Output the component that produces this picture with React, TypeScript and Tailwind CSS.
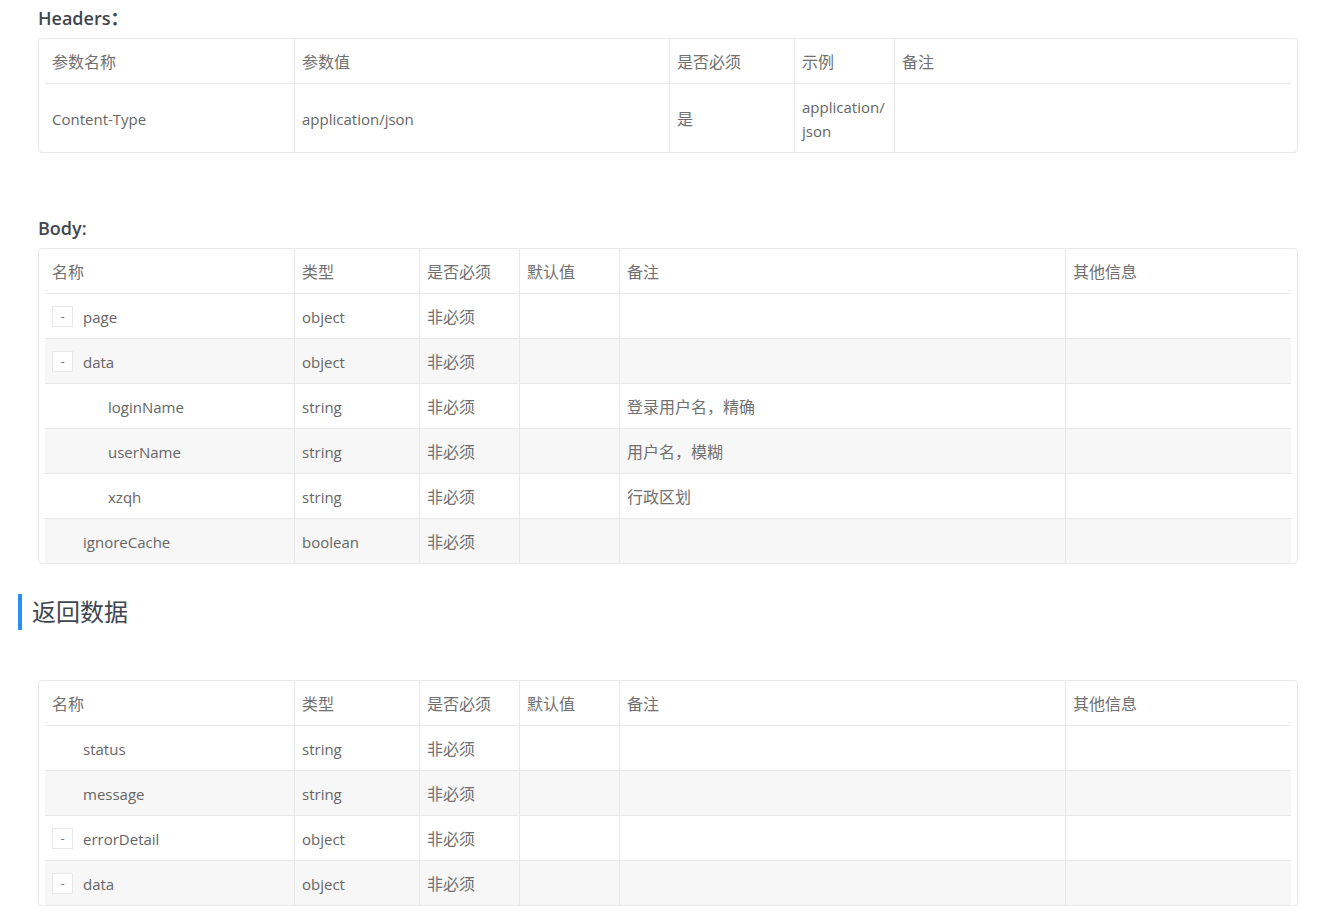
import React from "react";

type Row = {
  name: string;
  type: string;
  required: string;
  remark?: string;
  level: number;
  toggle?: boolean;
};

const bodyRows: Row[] = [
  { name: "page", type: "object", required: "非必须", level: 0, toggle: true },
  { name: "data", type: "object", required: "非必须", level: 0, toggle: true },
  { name: "loginName", type: "string", required: "非必须", remark: "登录用户名，精确", level: 1 },
  { name: "userName", type: "string", required: "非必须", remark: "用户名，模糊", level: 1 },
  { name: "xzqh", type: "string", required: "非必须", remark: "行政区划", level: 1 },
  { name: "ignoreCache", type: "boolean", required: "非必须", level: 0 },
];

const returnRows: Row[] = [
  { name: "status", type: "string", required: "非必须", level: 0 },
  { name: "message", type: "string", required: "非必须", level: 0 },
  { name: "errorDetail", type: "object", required: "非必须", level: 0, toggle: true },
  { name: "data", type: "object", required: "非必须", level: 0, toggle: true },
];

const font = "font-['Open_Sans','Noto_Sans_CJK_SC',sans-serif]";

// CJK glyphs are a touch larger and lighter than the latin text in the original
function Zh({ children }: { children: React.ReactNode }) {
  return <span className="text-[16px] text-[#707070]">{children}</span>;
}

function Cell({ children, first }: { children?: React.ReactNode; first?: boolean }) {
  return (
    <div
      className={
        "flex items-center px-[7px] pt-[2px] " + (first ? "" : "border-l border-[#e8e8e8]")
      }
    >
      {children}
    </div>
  );
}

function SubTitle({ children }: { children: React.ReactNode }) {
  return (
    <div className="ml-[20px] h-[36px] leading-[36px] mb-[2px] text-[18px] font-semibold text-[#3f4650]">
      {children}
    </div>
  );
}

function FieldTable({ rows }: { rows: Row[] }) {
  const cols = "grid grid-cols-[249px_125px_100px_100px_446px_1fr]";
  return (
    <div className="ml-[20px] border border-[#e8e8e8] rounded-[4px] px-[6px]">
      <div className={cols + " h-[45px] border-b border-[#e8e8e8]"}>
        <Cell first><Zh>名称</Zh></Cell>
        <Cell><Zh>类型</Zh></Cell>
        <Cell><Zh>是否必须</Zh></Cell>
        <Cell><Zh>默认值</Zh></Cell>
        <Cell><Zh>备注</Zh></Cell>
        <Cell><Zh>其他信息</Zh></Cell>
      </div>
      {rows.map((r, i) => {
        const last = i === rows.length - 1;
        return (
          <div
            key={i}
            className={
              cols +
              (last ? " h-[44px]" : " h-[45px] border-b border-[#e8e8e8]") +
              (i % 2 === 1 ? " bg-[#f7f7f7]" : "")
            }
          >
            <Cell first>
              {r.level === 1 && <span className="w-[25px] shrink-0" />}
              {r.toggle ? (
                <span className="w-[21px] h-[21px] -mt-[2px] shrink-0 border border-[#e8e8e8] bg-white flex items-center justify-center text-[13px] leading-none text-[#777]">
                  -
                </span>
              ) : (
                <span className="w-[21px] shrink-0" />
              )}
              <span className="ml-[10px]">{r.name}</span>
            </Cell>
            <Cell>{r.type}</Cell>
            <Cell><Zh>{r.required}</Zh></Cell>
            <Cell />
            <Cell>{r.remark && <Zh>{r.remark}</Zh>}</Cell>
            <Cell />
          </div>
        );
      })}
    </div>
  );
}

export default function App() {
  return (
    <div className={font + " bg-white w-[1318px] min-h-[924px] pl-[18px] pr-[20px] text-[15px] text-[#666]"}>
      <SubTitle>Headers：</SubTitle>
      <div className="ml-[20px] border border-[#e8e8e8] rounded-[4px] px-[6px]">
        <div className="grid grid-cols-[249px_375px_125px_100px_1fr] h-[45px] border-b border-[#e8e8e8]">
          <Cell first><Zh>参数名称</Zh></Cell>
          <Cell><Zh>参数值</Zh></Cell>
          <Cell><Zh>是否必须</Zh></Cell>
          <Cell><Zh>示例</Zh></Cell>
          <Cell><Zh>备注</Zh></Cell>
        </div>
        <div className="grid grid-cols-[249px_375px_125px_100px_1fr] h-[68px]">
          <Cell first>Content-Type</Cell>
          <Cell>application/json</Cell>
          <Cell><Zh>是</Zh></Cell>
          <Cell>
            <span className="leading-[24px]">
              application/
              <wbr />
              json
            </span>
          </Cell>
          <Cell />
        </div>
      </div>

      <div className="mt-[57px]">
        <SubTitle>Body:</SubTitle>
        <FieldTable rows={bodyRows} />
      </div>

      <div className="mt-[30px] h-[36px] flex items-center border-l-4 border-[#2a8ff0] pl-[10px] text-[24px] text-[#3f4650]">
        返回数据
      </div>

      <div className="mt-[50px]">
        <FieldTable rows={returnRows} />
      </div>
    </div>
  );
}
